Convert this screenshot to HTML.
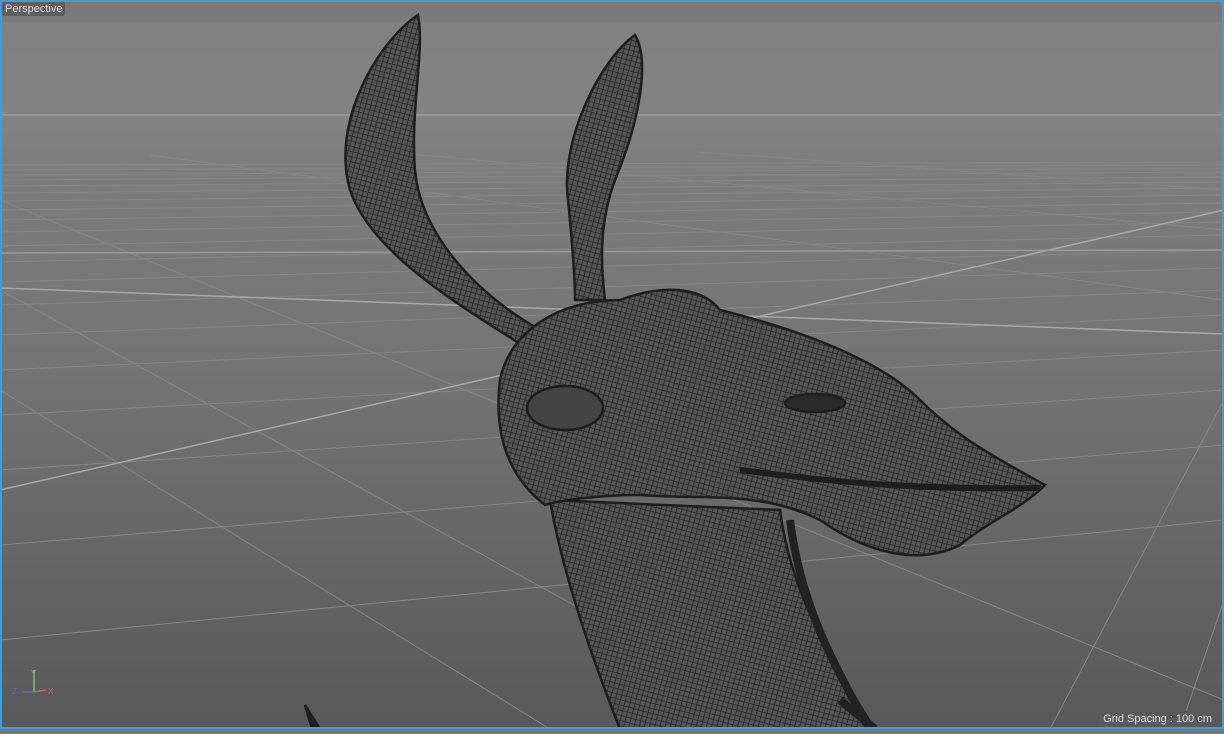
<!DOCTYPE html>
<html><head><style>
html,body{margin:0;padding:0;width:1224px;height:729px;overflow:hidden;background:#777}
.wrap{position:absolute;left:0;top:0;width:1224px;height:729px}
.lbl{position:absolute;left:2px;top:2px;background:#5f5f5f;color:#ddd;font:11px "Liberation Sans",sans-serif;padding:1px 3px;border-radius:2px}
.gs{position:absolute;right:6px;bottom:2px;background:#5a5a5a;color:#ddd;font:11px "Liberation Sans",sans-serif;padding:2px 6px}
.bd{position:absolute;left:0;top:0;width:1220px;height:725px;border:2px solid #3aa0d6}
</style></head><body>
<div class="wrap">
<svg width="1224" height="729" viewBox="0 0 1224 729">
<defs>
<linearGradient id="g" x1="0" y1="0" x2="0" y2="1">
<stop offset="0" stop-color="#808080"/><stop offset="0.16" stop-color="#838383"/><stop offset="0.22" stop-color="#7d7d7d"/><stop offset="0.5" stop-color="#747474"/><stop offset="1" stop-color="#585858"/>
</linearGradient>
<pattern id="m" width="5" height="5" patternUnits="userSpaceOnUse" patternTransform="rotate(15)">
<rect width="5" height="5" fill="#555"/>
<path d="M0,0H5M0,0V5" stroke="#262626" stroke-width="1.6"/>
</pattern>
</defs>
<rect width="1224" height="729" fill="url(#g)"/>
<rect width="1224" height="22" fill="#7a7a7a"/>
<line x1="0" y1="115" x2="1224" y2="115" stroke="#a5a5a5" stroke-width="1"/>
<g stroke="#868686" stroke-width="1" fill="none">
<line x1="0" y1="165" x2="1224" y2="162"/>
<line x1="0" y1="170" x2="1224" y2="165"/>
<line x1="0" y1="175" x2="1224" y2="168"/>
<line x1="0" y1="180" x2="1224" y2="172"/>
<line x1="0" y1="186" x2="1224" y2="177"/>
<line x1="0" y1="193" x2="1224" y2="182"/>
<line x1="0" y1="201" x2="1224" y2="188"/>
<line x1="0" y1="210" x2="1224" y2="195"/>
<line x1="0" y1="220" x2="1224" y2="203"/>
<line x1="0" y1="232" x2="1224" y2="212"/>
<line x1="0" y1="246" x2="1224" y2="222"/>
<line x1="0" y1="262" x2="1224" y2="235"/>
<line x1="0" y1="282" x2="1224" y2="250"/>
<line x1="0" y1="305" x2="1224" y2="268"/>
<line x1="0" y1="335" x2="1224" y2="290"/>
<line x1="0" y1="370" x2="1224" y2="315"/>
<line x1="0" y1="415" x2="1224" y2="350"/>
<line x1="0" y1="470" x2="1224" y2="390"/>
<line x1="0" y1="545" x2="1224" y2="445"/>
<line x1="0" y1="640" x2="1224" y2="520"/>
<line x1="0" y1="200" x2="1224" y2="700"/>
<line x1="0" y1="290" x2="800" y2="729"/>
<line x1="0" y1="390" x2="550" y2="729"/>
<line x1="150" y1="155" x2="1224" y2="300"/>
<line x1="400" y1="153" x2="1224" y2="230"/>
<line x1="700" y1="152" x2="1224" y2="190"/>
<line x1="1224" y1="600" x2="1180" y2="729"/>
<line x1="1224" y1="400" x2="1050" y2="729"/>
</g>
<g stroke="#a8a8a8" stroke-width="1.5" fill="none">
<line x1="0" y1="288" x2="1224" y2="334"/>
<line x1="0" y1="490" x2="1224" y2="210"/>
<line x1="0" y1="253" x2="1224" y2="250" stroke="#999"/>
</g>
<g fill="url(#m)" stroke="#1e1e1e" stroke-width="2.5">
<path d="M418,15 C380,40 330,120 350,190 C370,250 450,300 530,350 L540,330 C470,290 420,230 415,170 C410,110 425,50 418,15Z"/>
<path d="M635,35 C600,60 560,140 568,200 C572,240 575,280 575,300 L605,300 C600,260 600,220 615,180 C640,120 650,60 635,35Z"/>
<path d="M550,500 C560,560 585,640 620,729 L875,729 C830,660 790,590 780,510Z"/>
<path d="M500,380 C510,330 560,300 620,300 C660,285 700,285 720,310 C800,330 880,360 920,400 C960,440 1000,460 1045,485 C1020,510 990,520 960,545 C920,565 870,555 820,520 C760,490 700,500 640,495 C600,495 560,500 545,505 C500,470 495,420 500,380Z"/>
<ellipse cx="815" cy="403" rx="30" ry="9" fill="#2a2a2a"/>
<ellipse cx="565" cy="408" rx="38" ry="22" fill="#444"/>
<path d="M305,705 L320,729 L312,729Z" fill="#222"/>
</g>
<path d="M740,470 C820,480 900,490 1040,488" stroke="#1e1e1e" stroke-width="6" fill="none"/>
<path d="M840,700 L875,729 M790,520 C800,600 830,660 870,729" stroke="#222" stroke-width="8" fill="none"/>
<g stroke-width="1.5">
<line x1="34" y1="692" x2="34" y2="670" stroke="#6c6"/>
<line x1="34" y1="692" x2="22" y2="692" stroke="#66c"/>
<line x1="34" y1="692" x2="46" y2="690" stroke="#c66"/>
</g>
<text x="31" y="676" fill="#6c6" font-size="8" font-family="Liberation Sans">Y</text>
<text x="12" y="694" fill="#66c" font-size="8" font-family="Liberation Sans">Z</text>
<text x="48" y="694" fill="#c66" font-size="8" font-family="Liberation Sans">X</text>
</svg>
<div class="lbl">Perspective</div>
<div class="gs">Grid Spacing : 100 cm</div>
<div class="bd"></div>
</div>
</body></html>
